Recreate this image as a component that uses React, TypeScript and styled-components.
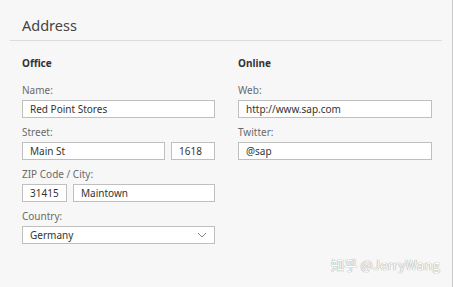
import styled, { createGlobalStyle } from 'styled-components'

const Global = createGlobalStyle`
  html, body {
    margin: 0;
    padding: 0;
    background: #f7f7f7;
  }
  body {
    font-family: 'Noto Sans', 'Open Sans', sans-serif;
  }
`

const Page = styled.div`
  position: relative;
  width: 452px;
  height: 287px;
  background: #f7f7f7;
  border-right: 1px solid #c8c8c8;
  overflow: hidden;
`

const Header = styled.div`
  margin: 0 10px;
  padding: 15px 0 0 12px;
  height: 25px;
  border-bottom: 1px solid #dcdcdc;
`

const Title = styled.h1`
  margin: 0;
  font-size: 14.5px;
  font-weight: 400;
  color: #444;
  line-height: 20px;
`

const Columns = styled.div`
  display: grid;
  grid-template-columns: 193px 194px;
  column-gap: 23px;
  padding: 15px 0 0 22px;
`

const Column = styled.div`
  display: flex;
  flex-direction: column;
`

const GroupTitle = styled.div`
  font-size: 10px;
  font-weight: 700;
  color: #333;
  line-height: 14px;
  margin-bottom: 13px;
`

const Label = styled.div`
  font-size: 10px;
  color: #6a6a6a;
  line-height: 14px;
  height: 14px;
  margin-bottom: 3px;
`

const Row = styled.div`
  display: flex;
  gap: 6px;
  margin-bottom: 7px;
`

const Input = styled.div<{ $w?: number }>`
  box-sizing: border-box;
  height: 18px;
  ${(p) => (p.$w ? `width: ${p.$w}px; flex: none;` : 'flex: 1;')}
  background: #fff;
  border: 1px solid #bfbfbf;
  padding: 0 7px;
  font-size: 10px;
  line-height: 16px;
  color: #333;
  display: flex;
  align-items: center;
  justify-content: space-between;
`

const Chevron = styled.svg`
  width: 10px;
  height: 6px;
`

const Watermark = styled.div`
  position: absolute;
  right: 12px;
  bottom: 13px;
  font-family: 'Noto Sans CJK SC', 'Noto Sans', sans-serif;
  font-size: 13px;
  color: #fff;
  text-shadow: 0 0 1px #9a9a9a, 0 0 1px #9a9a9a;
  letter-spacing: 0.2px;
`

export default function App() {
  return (
    <>
      <Global />
      <Page>
        <Header>
          <Title>Address</Title>
        </Header>
        <Columns>
          <Column>
            <GroupTitle>Office</GroupTitle>
            <Label>Name:</Label>
            <Row>
              <Input>Red Point Stores</Input>
            </Row>
            <Label>Street:</Label>
            <Row>
              <Input>Main St</Input>
              <Input $w={44}>1618</Input>
            </Row>
            <Label>ZIP Code / City:</Label>
            <Row>
              <Input $w={45}>31415</Input>
              <Input>Maintown</Input>
            </Row>
            <Label>Country:</Label>
            <Row>
              <Input>
                Germany
                <Chevron viewBox="0 0 10 6">
                  <path d="M1 1 L5 5 L9 1" fill="none" stroke="#888" strokeWidth="1" />
                </Chevron>
              </Input>
            </Row>
          </Column>
          <Column>
            <GroupTitle>Online</GroupTitle>
            <Label>Web:</Label>
            <Row>
              <Input>http://www.sap.com</Input>
            </Row>
            <Label>Twitter:</Label>
            <Row>
              <Input>@sap</Input>
            </Row>
          </Column>
        </Columns>
        <Watermark>知乎 @JerryWang</Watermark>
      </Page>
    </>
  )
}
